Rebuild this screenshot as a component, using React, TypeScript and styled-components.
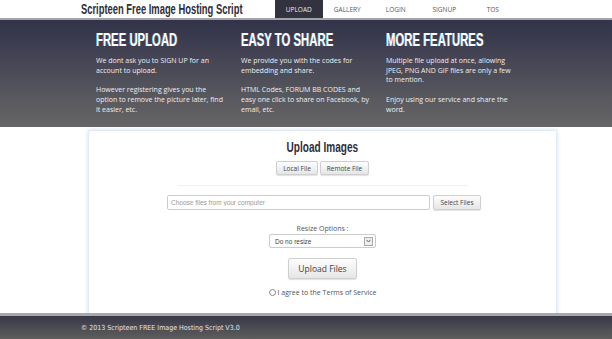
import React from 'react';
import styled, { createGlobalStyle } from 'styled-components';

const GlobalStyle = createGlobalStyle`
  html, body {
    margin: 0;
    padding: 0;
    background: #ffffff;
    font-family: "Open Sans", "Liberation Sans", sans-serif;
  }
`;

const condensed = `"DejaVu Sans Condensed", "Liberation Sans", sans-serif`;

// the original uses a narrow display face; squeeze a bold sans to its width
const Narrow = styled.span<{ $scale: number; $origin?: string }>`
  display: inline-block;
  white-space: nowrap;
  transform: scaleX(${(p) => p.$scale});
  transform-origin: ${(p) => p.$origin || 'left'} center;
`;

const TopBar = styled.header`
  height: 18px;
  background: #fff;
  border-bottom: 2px solid #a4a4a4;
  display: flex;
  align-items: stretch;
  padding-left: 81px;
`;

const Brand = styled.h1`
  margin: 0;
  width: 193.5px;
  font-family: "Liberation Sans", sans-serif;
  font-weight: bold;
  font-size: 15px;
  line-height: 18px;
  color: #2e2e38;
`;

const Nav = styled.nav`
  display: flex;
`;

const NavItem = styled.a<{ $active?: boolean }>`
  width: 48.5px;
  display: flex;
  align-items: center;
  justify-content: center;
  font-size: 6.5px;
  color: ${(p) => (p.$active ? '#e8e8ee' : '#555')};
  background: ${(p) => (p.$active ? '#33333f' : 'transparent')};
  text-decoration: none;
`;

const Hero = styled.section`
  height: 107px;
  background: linear-gradient(#32324a, #666666);
  display: flex;
  padding-left: 96px;
  box-sizing: border-box;
  padding-top: 11px;
`;

const Feature = styled.div`
  width: 145px;
  color: #f0f0f0;
`;

const FeatureTitle = styled.h2`
  margin: 0 0 7px;
  font-family: "Liberation Sans", sans-serif;
  font-weight: bold;
  font-size: 18px;
  line-height: 18px;
  color: #fff;
  text-shadow: -1px 0 0 rgba(0, 220, 255, 0.5), 1px 0 0 rgba(255, 90, 90, 0.3);
`;

const FeatureText = styled.p`
  margin: 0 0 9.7px;
  width: 130px;
  font-size: 7px;
  line-height: 9.7px;
  color: #eeeef2;
`;

const Main = styled.main`
  padding: 3px 0 0 88px;
  height: 186px;
  box-sizing: border-box;
  overflow: hidden;
`;

const Panel = styled.div`
  width: 469px;
  height: 200px;
  box-sizing: border-box;
  background: #fff;
  border: 1px solid #e3ebf5;
  box-shadow: 0 0 4px rgba(150, 180, 220, 0.45);
  border-radius: 2px;
  display: flex;
  flex-direction: column;
  align-items: center;
  padding-top: 7px;
`;

const PanelTitle = styled.h3`
  margin: 0;
  font-family: "Liberation Sans", sans-serif;
  font-weight: bold;
  font-size: 15px;
  line-height: 18px;
  color: #2e2e38;
`;

const Tabs = styled.div`
  display: flex;
  gap: 2px;
  margin-top: 5px;
`;

const Button = styled.button<{ $h: number; $size: number; $w: number }>`
  height: ${(p) => p.$h}px;
  width: ${(p) => p.$w}px;
  padding: 0;
  font-family: "Open Sans", "Liberation Sans", sans-serif;
  font-size: ${(p) => p.$size}px;
  color: #444;
  background: linear-gradient(#fdfdfd, #e6e6e6);
  border: 1px solid #cfcfcf;
  border-radius: 2px;
  box-shadow: 0 1px 1px rgba(0, 0, 0, 0.12);
`;

const Divider = styled.hr`
  width: 290px;
  margin: 10px 0 9px;
  border: 0;
  border-top: 1px solid #eef0f2;
`;

const FileRow = styled.div`
  display: flex;
  align-items: center;
  gap: 3px;
  margin-left: 3px;
`;

const FileInput = styled.input`
  width: 263px;
  height: 15px;
  box-sizing: border-box;
  border: 1px solid #ccc;
  border-radius: 2px;
  padding: 0 3px;
  font-family: "Liberation Sans", sans-serif;
  font-size: 6.5px;
  color: #999;
  &::placeholder {
    color: #9a9a9a;
  }
`;

const ResizeLabel = styled.div`
  margin-top: 14px;
  font-size: 7px;
  line-height: 9px;
  color: #555;
`;

const SelectBox = styled.div`
  margin-top: 1px;
  width: 107px;
  height: 14px;
  box-sizing: border-box;
  border: 1px solid #ccc;
  border-radius: 2px;
  display: flex;
  align-items: center;
  justify-content: space-between;
  padding: 0 2px 0 5px;
  font-family: "Liberation Sans", sans-serif;
  font-size: 6.5px;
  color: #444;
`;

const SelectArrow = styled.span`
  width: 7px;
  height: 7px;
  border: 1px solid #aaa;
  background: #eee;
  display: flex;
  align-items: center;
  justify-content: center;
`;

const UploadWrap = styled.div`
  margin-top: 7px;
`;

const Agree = styled.label`
  margin-top: 9px;
  display: flex;
  align-items: center;
  gap: 2px;
  font-size: 7px;
  line-height: 9px;
  color: #555;
`;

const Radio = styled.span`
  width: 5px;
  height: 5px;
  border: 1px solid #888;
  border-radius: 50%;
`;

const Footer = styled.footer`
  height: 23px;
  border-top: 3px solid #a8a8a8;
  background: linear-gradient(#383848, #5e5e5e);
  display: flex;
  align-items: center;
  padding-left: 81px;
  font-family: ${condensed};
  font-size: 7px;
  color: #e4e4e8;
`;

const features = [
  {
    title: 'FREE UPLOAD',
    text: [
      'We dont ask you to SIGN UP for an account to upload.',
      'However registering gives you the option to remove the picture later, find it easier, etc.',
    ],
  },
  {
    title: 'EASY TO SHARE',
    text: [
      'We provide you with the codes for embedding and share.',
      'HTML Codes, FORUM BB CODES and easy one click to share on Facebook, by email, etc.',
    ],
  },
  {
    title: 'MORE FEATURES',
    text: [
      'Multiple file upload at once, allowing JPEG, PNG AND GIF files are only a few to mention.',
      'Enjoy using our service and share the word.',
    ],
  },
];

const navItems = ['UPLOAD', 'GALLERY', 'LOGIN', 'SIGNUP', 'TOS'];

export default function App() {
  return (
    <>
      <GlobalStyle />
      <TopBar>
        <Brand>
          <Narrow $scale={0.625}>Scripteen Free Image Hosting Script</Narrow>
        </Brand>
        <Nav>
          {navItems.map((n, i) => (
            <NavItem key={n} $active={i === 0}>
              {n}
            </NavItem>
          ))}
        </Nav>
      </TopBar>
      <Hero>
        {features.map((f) => (
          <Feature key={f.title}>
            <FeatureTitle>
              <Narrow $scale={0.63}>{f.title}</Narrow>
            </FeatureTitle>
            {f.text.map((t) => (
              <FeatureText key={t}>{t}</FeatureText>
            ))}
          </Feature>
        ))}
      </Hero>
      <Main>
        <Panel>
          <PanelTitle>
            <Narrow $scale={0.67} $origin="center">
              Upload Images
            </Narrow>
          </PanelTitle>
          <Tabs>
            <Button $h={14} $size={6.5} $w={42}>
              Local File
            </Button>
            <Button $h={14} $size={6.5} $w={49}>
              Remote File
            </Button>
          </Tabs>
          <Divider />
          <FileRow>
            <FileInput placeholder="Choose files from your computer" />
            <Button $h={15} $size={6.5} $w={48}>
              Select Files
            </Button>
          </FileRow>
          <ResizeLabel>Resize Options :</ResizeLabel>
          <SelectBox>
            Do no resize
            <SelectArrow>
              <svg width="5" height="4" viewBox="0 0 5 4">
                <path d="M0.5 0.8 L2.5 3 L4.5 0.8" fill="none" stroke="#555" strokeWidth="0.9" />
              </svg>
            </SelectArrow>
          </SelectBox>
          <UploadWrap>
            <Button $h={21} $size={8.5} $w={69}>
              Upload Files
            </Button>
          </UploadWrap>
          <Agree>
            <Radio />I agree to the Terms of Service
          </Agree>
        </Panel>
      </Main>
      <Footer>© 2013 Scripteen FREE Image Hosting Script V3.0</Footer>
    </>
  );
}
